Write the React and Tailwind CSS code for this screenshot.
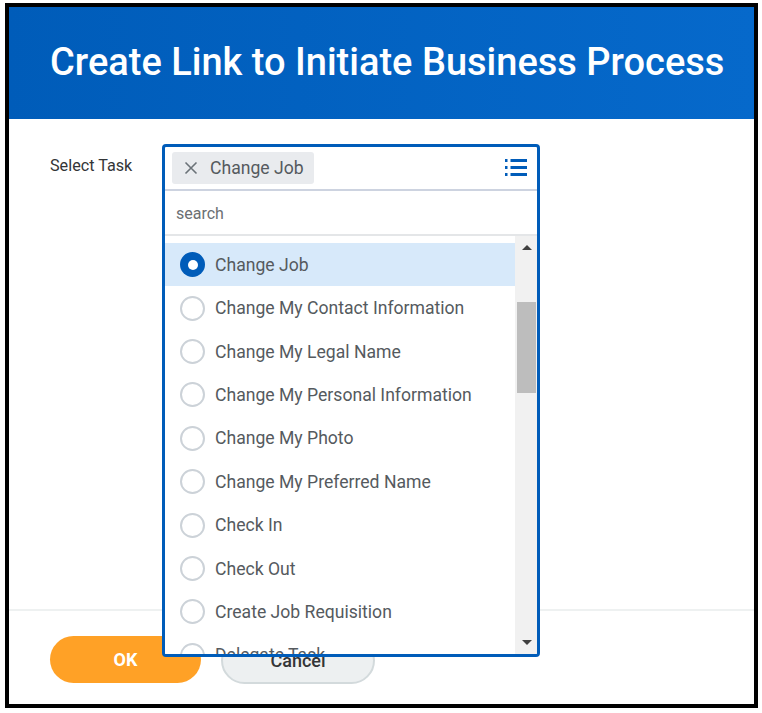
import React from 'react';

const tasks = [
  'Change Job',
  'Change My Contact Information',
  'Change My Legal Name',
  'Change My Personal Information',
  'Change My Photo',
  'Change My Preferred Name',
  'Check In',
  'Check Out',
  'Create Job Requisition',
  'Delegate Task',
];

const TaskRow = ({ label, selected }) => {
  return (
    <div className={`flex h-[43.4px] shrink-0 items-center gap-[10px] pl-[15px] ${selected ? 'bg-[#d7e9fa]' : 'bg-white'}`}>
      {selected ? (
        <span className="flex h-[25px] w-[25px] items-center justify-center rounded-full bg-[#005cb9]">
          <span className="h-[10px] w-[10px] rounded-full bg-white" />
        </span>
      ) : (
        <span className="h-[25px] w-[25px] rounded-full border-2 border-[#ccd2d8] bg-white" />
      )}
      <span className="mt-[2px] text-[17.6px] leading-none text-[#555a5e]">{label}</span>
    </div>
  );
};

const TaskDropdown = () => {
  return (
    <div className="absolute left-[153px] top-[137px] flex h-[513px] w-[378px] flex-col overflow-hidden rounded-[4px] border-[3px] border-[#005cb9] bg-white">
      <div className="flex h-[44px] shrink-0 items-start justify-between border-b-2 border-[#cdd3e0] pl-[7px] pr-[10px] pt-[5px]">
        <div className="flex h-[32px] w-[142px] items-center gap-[12px] rounded-[3px] bg-[#e9ebee] pl-[12px]">
          <svg width="14" height="14" viewBox="0 0 14 14" fill="none" stroke="#6b7278" strokeWidth="1.6">
            <path d="M1.5 1.5l11 11M12.5 1.5l-11 11" />
          </svg>
          <span className="mt-[2px] text-[17.6px] leading-none text-[#555a5e]">Change Job</span>
        </div>
        <svg className="mt-[7px]" width="22" height="17" viewBox="0 0 22 17" fill="#005cb9">
          <rect x="0" y="0" width="2.5" height="3" />
          <rect x="5.5" y="0" width="16.5" height="3" />
          <rect x="0" y="7" width="2.5" height="3" />
          <rect x="5.5" y="7" width="16.5" height="3" />
          <rect x="0" y="14" width="2.5" height="3" />
          <rect x="5.5" y="14" width="16.5" height="3" />
        </svg>
      </div>
      <div className="flex h-[45px] shrink-0 items-center border-b-2 border-[#e4e6e8] pl-[11px] pt-[2px] text-[16px] text-[#6b6f73]">
        search
      </div>
      <div className="flex min-h-0 flex-1">
        <div className="flex min-w-0 flex-1 flex-col overflow-hidden pt-[7px]">
          {tasks.map((task, i) => (
            <TaskRow key={task} label={task} selected={i === 0} />
          ))}
        </div>
        <div className="relative w-[22px] shrink-0 bg-[#f1f1f1]">
          <div className="absolute left-[7px] top-[9px] h-0 w-0 border-x-[5px] border-b-[5px] border-x-transparent border-b-[#404040]" />
          <div className="absolute left-[2px] top-[66px] h-[91px] w-[19px] bg-[#bdbdbd]" />
          <div className="absolute bottom-[9px] left-[7px] h-0 w-0 border-x-[5px] border-t-[5px] border-x-transparent border-t-[#404040]" />
        </div>
      </div>
    </div>
  );
};

export default function App() {
  return (
    <div className="h-[713px] w-[762px] bg-white pl-[5px] pt-[3px] font-['Roboto',sans-serif]">
      <div className="relative flex h-[705px] w-[753px] flex-col border-4 border-black bg-white">
        <div className="flex h-[112px] shrink-0 items-center bg-gradient-to-r from-[#005cb9] to-[#0669cb] pb-[2px] pl-[41px]">
          <h1 className="whitespace-nowrap text-[38px] font-medium leading-none text-white">Create Link to Initiate Business Process</h1>
        </div>
        <div className="flex-1 pl-[41px] pt-[35px]">
          <span className="text-[16.2px] leading-[18px] text-[#333537]">Select Task</span>
        </div>
        <div className="flex h-[95px] shrink-0 items-start gap-[20px] border-t-2 border-[#eef1f1] pl-[41px] pt-[25px]">
          <button className="h-[47px] w-[151px] rounded-full bg-[#ffa126] text-[18px] font-bold text-white">OK</button>
          <button className="mt-[1px] h-[47px] w-[154px] rounded-full border-2 border-[#d3dadc] bg-[#edf0f1] text-[18px] font-medium text-[#333537]">Cancel</button>
        </div>
        <TaskDropdown />
      </div>
    </div>
  );
}
